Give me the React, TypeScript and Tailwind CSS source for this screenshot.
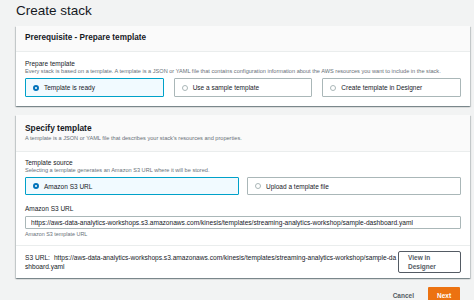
import React from "react";

function Radio({ checked }: { checked: boolean }) {
  return checked ? (
    <span className="inline-block w-[6px] h-[6px] rounded-full border-[2px] border-[#0073bb] bg-white shrink-0" />
  ) : (
    <span className="inline-block w-[6px] h-[6px] rounded-full border border-[#aab7b8] bg-white shrink-0" />
  );
}

function Tile({ label, checked, h }: { label: string; checked: boolean; h: string }) {
  return (
    <div
      className={
        (checked ? "bg-[#f1faff] border-[#00a1c9] " : "bg-white border-[#aab7b8] ") +
        "border rounded-[1px] flex items-center gap-[5px] pl-[7px] " +
        h
      }
    >
      <Radio checked={checked} />
      <span className="text-[6.5px] leading-[9px] text-[#16191f]">{label}</span>
    </div>
  );
}

const URL =
  "https://aws-data-analytics-workshops.s3.amazonaws.com/kinesis/templates/streaming-analytics-workshop/sample-dashboard.yaml";

export default function App() {
  const shadow =
    "shadow-[0_1px_1px_0_rgba(0,28,36,0.3),1px_1px_1px_0_rgba(0,28,36,0.15),-1px_1px_1px_0_rgba(0,28,36,0.15)]";
  return (
    <div className="w-[474px] h-[300px] overflow-hidden bg-[#f2f3f3] text-[#16191f] font-['Liberation_Sans',Arial,sans-serif]">
      <div className="pl-4 pr-1">
        <h1 className="h-[26px] text-[13.5px] leading-[22px] font-normal">Create stack</h1>

        <div className={"bg-white " + shadow}>
          <div className="h-[26px] bg-[#fafafa] border-b border-[#eaeded] px-[9px] flex items-center">
            <span className="text-[8.2px] font-bold">Prerequisite - Prepare template</span>
          </div>
          <div className="px-[9px] pt-[7px] pb-[9px]">
            <div className="text-[6.5px] leading-[9px]">Prepare template</div>
            <div className="text-[5.6px] leading-[7px] text-[#687078] whitespace-nowrap">
              Every stack is based on a template. A template is a JSON or YAML file that contains configuration
              information about the AWS resources you want to include in the stack.
            </div>
            <div className="mt-[3px] grid grid-cols-3 gap-[10px]">
              <Tile label="Template is ready" checked={true} h="h-[19px]" />
              <Tile label="Use a sample template" checked={false} h="h-[19px]" />
              <Tile label="Create template in Designer" checked={false} h="h-[19px]" />
            </div>
          </div>
        </div>

        <div className={"mt-[9px] bg-white " + shadow}>
          <div className="h-[37px] bg-[#fafafa] border-b border-[#eaeded] px-[9px] pt-[7px]">
            <div className="text-[8.4px] leading-[12px] font-bold">Specify template</div>
            <div className="text-[5.6px] leading-[8px] text-[#687078]">
              A template is a JSON or YAML file that describes your stack's resources and properties.
            </div>
          </div>
          <div className="px-[9px] pt-[6px] pb-[7px]">
            <div className="text-[6.5px] leading-[9px]">Template source</div>
            <div className="text-[5.6px] leading-[7px] text-[#687078]">
              Selecting a template generates an Amazon S3 URL where it will be stored.
            </div>
            <div className="mt-[3px] grid grid-cols-2 gap-[8px]">
              <Tile label="Amazon S3 URL" checked={true} h="h-[18px]" />
              <Tile label="Upload a template file" checked={false} h="h-[18px]" />
            </div>
            <div className="mt-[9px] text-[6.5px] leading-[9px]">Amazon S3 URL</div>
            <div className="mt-[3px] h-[13px] border border-[#aab7b8] rounded-[1px] bg-white flex items-center pl-[5px]">
              <span className="text-[6.6px] leading-[9px] whitespace-nowrap overflow-hidden">{URL}</span>
            </div>
            <div className="mt-[1px] text-[5.4px] leading-[8px] text-[#687078]">Amazon S3 template URL</div>
          </div>
          <div className="border-t border-[#eaeded] px-[9px] pt-[5px] pb-[5px] flex items-start gap-[1px]">
            <p className="flex-1 pt-[2px] text-[6.6px] leading-[9px] break-all">
              <span className="mr-[4px]">S3 URL:</span>
              {URL}
            </p>
            <button className="w-[63px] h-[22px] shrink-0 border border-[#545b64] rounded-[2px] bg-white text-left pl-[9px] text-[6.5px] leading-[9px] font-bold text-[#545b64]">
              View in
              <br />
              Designer
            </button>
          </div>
        </div>

        <div className="mt-[9px] flex justify-end items-center pr-[10px]">
          <span className="text-[6.5px] font-bold text-[#545b64] mr-[14px]">Cancel</span>
          <button className="w-[32px] h-[17px] bg-[#ec7211] rounded-[1px] text-white text-[6.5px] font-bold">
            Next
          </button>
        </div>
      </div>
    </div>
  );
}
